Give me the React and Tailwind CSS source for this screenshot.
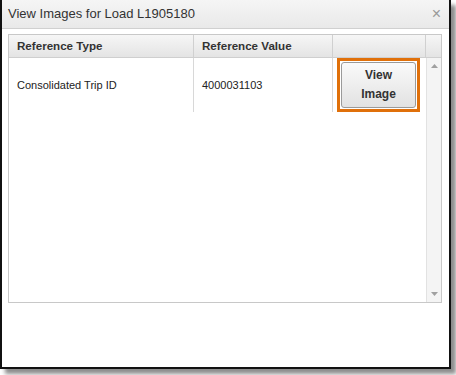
export default function App() {
  const font = { fontFamily: '"Liberation Sans", Arial, sans-serif' };
  return (
    <div className="w-[456px] h-[375px] bg-white relative" style={font}>
      <div className="w-[451px] h-[369px] flex flex-col bg-white border-l-2 border-r-2 border-b-2 border-[#111] shadow-[5px_5px_4px_rgba(0,0,0,0.45)]">
        <div className="h-[29px] shrink-0 flex items-center justify-between pl-[6px] pr-[8px] bg-gradient-to-b from-[#f5f5f5] to-[#e9e9e9] border-b border-[#d0d0d0]">
          <span className="text-[13px] text-[#333]">View Images for Load L1905180</span>
          <span className="text-[16px] text-[#999] leading-none">×</span>
        </div>
        <div className="pt-[5px] pl-[6px]">
          <div className="w-[434px] h-[269px] border border-[#c8c8c8] flex flex-col">
            <div className="h-[23px] shrink-0 flex bg-gradient-to-b from-[#f6f6f6] to-[#e4e4e4] border-b border-[#cfcfcf] text-[11.6px] font-bold text-[#333]">
              <div className="w-[185px] border-r border-[#d0d0d0] flex items-center pl-[8px]">Reference Type</div>
              <div className="w-[139px] border-r border-[#d0d0d0] flex items-center pl-[8px]">Reference Value</div>
              <div className="w-[93px] border-r border-[#d0d0d0]"></div>
              <div className="flex-1"></div>
            </div>
            <div className="flex flex-1">
              <div className="w-[417px]">
                <div className="h-[54px] flex text-[11px] text-[#222]">
                  <div className="w-[185px] border-r border-[#d8d8d8] flex items-center pl-[8px]">Consolidated Trip ID</div>
                  <div className="w-[139px] border-r border-[#d8d8d8] flex items-center pl-[8px]">4000031103</div>
                  <div className="w-[93px] flex items-center pl-[4px]">
                    <div className="w-[83px] h-[54px] border-[3px] border-[#e0700a] p-[1px]">
                      <div className="w-full h-full rounded-[3px] border border-[#9a9a9a] bg-gradient-to-b from-[#fafafa] to-[#e2e2e2] flex flex-col items-center justify-center text-[12px] font-bold text-[#333] leading-[19px]">
                        <span>View</span>
                        <span>Image</span>
                      </div>
                    </div>
                  </div>
                </div>
              </div>
              <div className="flex-1 bg-[#f4f4f4] border-l border-[#e2e2e2] flex flex-col items-center justify-between py-[6px]">
                <svg width="7" height="4" viewBox="0 0 7 4"><path d="M0 4 L3.5 0 L7 4 Z" fill="#a0a0a0" /></svg>
                <svg width="7" height="4" viewBox="0 0 7 4"><path d="M0 0 L7 0 L3.5 4 Z" fill="#a0a0a0" /></svg>
              </div>
            </div>
          </div>
        </div>
      </div>
    </div>
  );
}
